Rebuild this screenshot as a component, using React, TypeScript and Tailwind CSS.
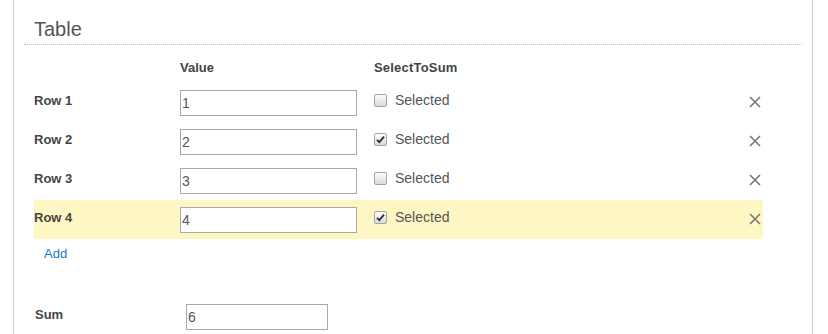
import { useState } from "react";

type Row = { name: string; value: string; selected: boolean };

const initialRows: Row[] = [
  { name: "Row 1", value: "1", selected: false },
  { name: "Row 2", value: "2", selected: true },
  { name: "Row 3", value: "3", selected: false },
  { name: "Row 4", value: "4", selected: true },
];

const CheckBox = ({ checked }: { checked: boolean }) => (
  <span className="w-[13px] h-[13px] rounded-[2px] border border-[#a4a4a4] bg-linear-to-b from-[#fdfdfd] to-[#dadada] flex items-center justify-center">
    {checked && (
      <svg width="9" height="9" viewBox="0 0 9 9">
        <path
          d="M1 4.8 L3.4 7.2 L8 1.6"
          fill="none"
          stroke="#333"
          strokeWidth="1.9"
        />
      </svg>
    )}
  </span>
);

const RemoveIcon = () => (
  <svg width="12" height="12" viewBox="0 0 12 12">
    <path
      d="M1 1 L11 11 M11 1 L1 11"
      stroke="#777"
      strokeWidth="1.6"
      fill="none"
    />
  </svg>
);

const App = () => {
  const [rows] = useState<Row[]>(initialRows);
  const sum = rows
    .filter((r) => r.selected)
    .reduce((acc, r) => acc + Number(r.value), 0);

  return (
    <div className="h-[334px] w-[828px] overflow-hidden bg-white font-['Liberation_Sans',Arial,sans-serif] text-[#555]">
      <div className="ml-[13px] w-[800px] h-full border-x border-[#cccccc] px-[10px]">
        {/* Header */}
        <div className="pt-[18px] pb-[4px] pl-[10px] border-b border-dotted border-[#bbbbbb]">
          <h2 className="text-[20px] leading-[22px] font-normal">Table</h2>
        </div>

        <div className="pl-[10px] pr-[39px]">
          {/* Column headers */}
          <div className="grid grid-cols-[146px_194px_1fr_30px] pt-[15px] pb-[8px] text-[13px] leading-[15px] font-bold text-[#444]">
            <span></span>
            <span>Value</span>
            <span className="tracking-[0.2px]">SelectToSum</span>
            <span></span>
          </div>

          {/* Rows */}
          {rows.map((row, i) => (
            <div
              key={row.name}
              className={`grid grid-cols-[146px_194px_1fr_30px] items-center h-[39px] ${
                i === 3 ? "bg-[#fff7c3]" : ""
              }`}
            >
              <span className="text-[13px] font-bold text-[#444] mb-[3px]">
                {row.name}
              </span>
              <input
                readOnly
                value={row.value}
                className="w-[177px] h-[26px] border border-[#a9a9a9] bg-white px-[1px] text-[14px] text-[#555] outline-none"
              />
              <label className="flex items-center gap-[8px] mb-[4px] text-[14px]">
                <CheckBox checked={row.selected} />
                <span>Selected</span>
              </label>
              <span className="flex justify-end pr-[2px] mb-[1px]">
                <RemoveIcon />
              </span>
            </div>
          ))}

          {/* Add link */}
          <div className="mt-[7px] pl-[10px] text-[13px] leading-[15px]">
            <a className="text-[#1679c9] cursor-pointer">Add</a>
          </div>

          {/* Sum */}
          <div className="grid grid-cols-[152px_1fr] items-center h-[39px] mt-[36px]">
            <span className="pl-[1px] text-[13px] font-bold text-[#444] mb-[4px]">
              Sum
            </span>
            <input
              readOnly
              value={String(sum)}
              className="w-[142px] h-[26px] border border-[#a9a9a9] bg-white px-[1px] text-[14px] text-[#555] outline-none"
            />
          </div>
        </div>
      </div>
    </div>
  );
};

export default App;
